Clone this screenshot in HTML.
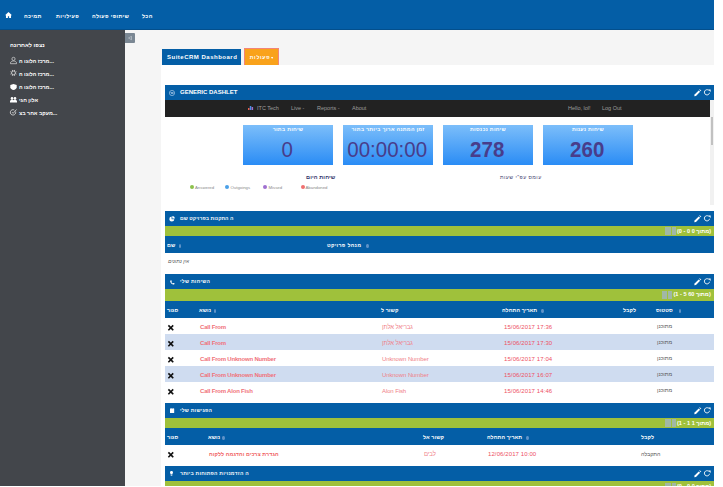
<!DOCTYPE html>
<html><head><meta charset="utf-8">
<style>
*{margin:0;padding:0;box-sizing:border-box}
html,body{width:723px;height:487px;overflow:hidden;background:#fff;font-family:"Liberation Sans",sans-serif}
.a{position:absolute}
.t{position:absolute;white-space:nowrap;line-height:1}
svg{position:absolute;overflow:visible}
#page{position:absolute;left:0;top:0;width:714px;height:486px;background:#f5f5f5;overflow:hidden}
#nav{left:0;top:0;width:714px;height:30px;background:#045ea6}
.nv{color:#fff;font-size:5.4px;font-weight:bold;top:13.5px;letter-spacing:.35px}
#side{left:0;top:30px;width:125px;height:457px;background:#43464b}
.si{color:#fff;font-size:5.3px;font-weight:bold}
#panel{left:161px;top:65px;width:553px;height:422px;background:#fff}
.hd{position:absolute;left:165px;width:549px;height:15px;background:#045ea6}
.hdt{color:#fff;font-size:6px;font-weight:bold}
.hdh{color:#fff;font-size:5px;font-weight:bold;letter-spacing:.1px}
.gr{position:absolute;left:165px;width:549px;background:#9fc13b}
.th{position:absolute;left:165px;width:549px;height:17px;background:#045ea6}
.tht{color:#fff;font-size:5.3px;font-weight:bold;letter-spacing:.1px}
.alt{position:absolute;left:165px;width:549px;height:16px;background:#cfdcf0}
.red{color:#f0727a;font-size:6px;font-weight:bold;letter-spacing:-.2px}
.rel{color:#f08088;font-size:6px;letter-spacing:-.1px}
.dt{color:#ee5064;font-size:6px;letter-spacing:.1px}
.st{color:#555;font-size:5.4px}
.pg{color:#fff;font-size:5.6px;font-weight:bold}
.pb{position:absolute;background:#a3b3d3;opacity:.7}
.box{position:absolute;top:125px;width:90px;height:40px;background:linear-gradient(#7cbefa,#2a8cf5)}
.bt{position:absolute;left:0;width:90px;top:2px;text-align:center;color:#fff;font-size:5.2px;font-weight:bold;line-height:1;letter-spacing:.3px}
.bn{position:absolute;left:-.8px;width:90px;top:14.1px;transform:scaleY(1.07);transform-origin:0 0;text-align:center;color:#483d8b;font-size:20.5px;line-height:1}
.ifn{color:#9d9d9d;font-size:5.5px}
.lg{color:#8a8a8a;font-size:4.3px}
.dot{position:absolute;width:4px;height:4px;border-radius:50%}
.srt{position:absolute;width:2.6px;height:4px;background:#5f93c8;border-radius:50%}
</style></head><body>
<div id="page">
  <!-- NAV -->
  <div id="nav" class="a">
    <svg style="left:5.4px;top:11.8px" width="7" height="6.1" viewBox="0 0 8 7"><path d="M4 0L0 3.6h1.1V7h2.2V4.8h1.4V7h2.2V3.6H8z" fill="#fff"/></svg>
    <span class="t nv" style="left:24px">תמיכה</span>
    <span class="t nv" style="left:56px">פעילויות</span>
    <span class="t nv" style="left:92px">שיתופי פעולה</span>
    <span class="t nv" style="left:142px">הכל</span>
  </div>
  <div class="a" style="left:0;top:29px;width:714px;height:1px;background:#034f8c"></div>

  <!-- SIDEBAR -->
  <div id="side" class="a">
    <span class="t si" style="left:10px;top:13px;font-size:5.6px;font-weight:bold">נצפו לאחרונה</span>
    <svg style="left:10px;top:27px" width="7" height="7" viewBox="0 0 7 7" fill="none" stroke="#ddd" stroke-width=".7"><circle cx="3.5" cy="1.9" r="1.6"/><path d="M.5 6.7V6c0-1.2 1.3-2 3-2s3 .8 3 2v.7z"/></svg>
    <span class="t si" style="left:19px;top:29px">מרכז הלוגו ה...</span>
    <svg style="left:10px;top:40.3px" width="7" height="6" viewBox="0 0 7 6" fill="none" stroke="#e0e0e0" stroke-width=".8"><circle cx="3.5" cy="2.9" r="1.9"/><path d="M5.44 3.70L6.46 4.12M4.30 4.84L4.72 5.86M2.70 4.84L2.28 5.86M1.56 3.70L0.54 4.12M1.56 2.10L0.54 1.68M2.70 0.96L2.28 -0.06M4.30 0.96L4.72 -0.06M5.44 2.10L6.46 1.68"/></svg>
    <span class="t si" style="left:19px;top:42px">מרכז הלוגו ה...</span>
    <svg style="left:10px;top:54px" width="7" height="6" viewBox="0 0 7 6"><path d="M3.5 0L.3 1v2.2C.3 4.6 2 5.6 3.5 6 5 5.6 6.7 4.6 6.7 3.2V1z" fill="#fff"/></svg>
    <span class="t si" style="left:19px;top:55px">מרכז הלוגו ה...</span>
    <svg style="left:10px;top:67px" width="7" height="6" viewBox="0 0 7 6" fill="#fff"><circle cx="2" cy="1.4" r="1.3"/><circle cx="5" cy="1.4" r="1.3"/><path d="M0 5.6V4.4c0-.9.9-1.6 2-1.6s2 .7 2 1.6v1.2zM3.2 5.6V4.4c0-.9.7-1.6 1.8-1.6S7 3.5 7 4.4v1.2z"/></svg>
    <span class="t si" style="left:19px;top:68px">אלון חגי</span>
    <svg style="left:10px;top:79.4px" width="6.7" height="6.3" viewBox="0 0 6.7 6.3" fill="none" stroke="#e0e0e0" stroke-width=".8"><path d="M5.6 2.6A2.7 2.7 0 1 1 4.3 1"/><path d="M2.1 3.2l1.1 1.1L6.5 .5"/></svg>
    <span class="t si" style="left:19px;top:81px">מעקב אחר בצ...</span>
  </div>
  <div class="a" style="left:125px;top:33px;width:10px;height:10px;background:#7a8793;border-radius:0 1px 1px 0"></div>
  <svg style="left:128px;top:36px" width="4" height="4" viewBox="0 0 4 4"><path d="M3.5 .3v3.4L.5 2z" fill="none" stroke="#c9d0d6" stroke-width=".6"/></svg>

  <!-- TABS -->
  <div class="a" style="left:162px;top:49px;width:79px;height:16px;background:#045ea6"></div>
  <span class="t" style="left:167px;top:53.5px;color:#fff;font-size:6px;font-weight:bold;letter-spacing:.5px">SuiteCRM Dashboard</span>
  <div class="a" style="left:244px;top:48px;width:35px;height:17px;background:#f9a21b;border:1px solid #f28478;border-bottom:none"></div>
  <span class="t" style="left:249.7px;top:55.3px;color:#fff;font-size:5.2px;font-weight:bold;letter-spacing:.7px">פעולות</span><svg style="left:271px;top:56.8px" width="2.2" height="2" viewBox="0 0 3 2.5"><path d="M0 0h3L1.5 2.5z" fill="#fff"/></svg>
  <div id="panel" class="a"></div>

  <!-- DASHLET 1 : generic -->
  <div class="hd" style="top:85px"></div>
  <svg style="left:169px;top:89.5px" width="6" height="6" viewBox="0 0 6 6" fill="none" stroke="#a9c8e8" stroke-width=".7"><circle cx="3" cy="3" r="2.6"/><path d="M1.5 2.5h3M2 3.5h2.5"/></svg>
  <span class="t hdt" style="left:180px;top:89.3px">GENERIC DASHLET</span>
  <div class="a" style="left:165px;top:100px;width:545px;height:17px;background:#222"></div>
  <div class="a" style="left:710px;top:100px;width:4px;height:105px;background:#f1f1f1"></div>
  <div class="a" style="left:711px;top:117px;width:2px;height:28px;background:#c1c1c1"></div>
  <svg style="left:248px;top:106px" width="6" height="4" viewBox="0 0 6 4"><rect x="0" y="2" width="1.5" height="2" fill="#e8604a"/><rect x="1.8" y="0" width="1.5" height="4" fill="#4a8ee8"/><rect x="3.6" y="1" width="1.5" height="3" fill="#a070d0"/></svg>
  <span class="t ifn" style="left:257px;top:106px">ITC Tech</span>
  <span class="t ifn" style="left:291px;top:106px">Live -</span>
  <span class="t ifn" style="left:317px;top:106px">Reports -</span>
  <span class="t ifn" style="left:352px;top:106px">About</span>
  <span class="t ifn" style="left:568px;top:106px">Hello, lol!</span>
  <span class="t ifn" style="left:602px;top:106px">Log Out</span>
  <div class="box" style="left:243px"><span class="bt">שיחות בתור</span><span class="bn">0</span></div>
  <div class="box" style="left:343px"><span class="bt">זמן המתנה ארוך ביותר בתור</span><span class="bn">00:00:00</span></div>
  <div class="box" style="left:443px"><span class="bt">שיחות נכנסות</span><span class="bn" style="font-weight:bold">278</span></div>
  <div class="box" style="left:543px"><span class="bt">שיחות נענות</span><span class="bn" style="font-weight:bold">260</span></div>
  <span class="t" style="left:306px;top:175px;color:#36366a;font-size:5.6px;font-weight:bold;letter-spacing:.1px">שיחות היום</span>
  <span class="t" style="left:500px;top:175px;color:#45456f;font-size:5.2px;letter-spacing:.45px">עומס עפ"י שעות</span>
  <div class="dot" style="left:190px;top:184.5px;background:#8cc14c"></div><span class="t lg" style="left:195px;top:186px">Answered</span>
  <div class="dot" style="left:225px;top:184.5px;background:#4aa0e8"></div><span class="t lg" style="left:230.5px;top:186px">Outgoings</span>
  <div class="dot" style="left:263px;top:184.5px;background:#a070d0"></div><span class="t lg" style="left:268.5px;top:186px">Missed</span>
  <div class="dot" style="left:300.5px;top:184.5px;background:#f07070"></div><span class="t lg" style="left:305.5px;top:186px">Abandoned</span>

  <!-- DASHLET 2 -->
  <div class="hd" style="top:211px"></div>
  <svg style="left:169px;top:215.8px" width="6" height="5.5" viewBox="0 0 6 5.5" fill="#fff"><path d="M2.6 .6A2.5 2.5 0 1 0 5.3 3.2H2.6z"/><path d="M3.3 0v2.5H5.8A2.5 2.5 0 0 0 3.3 0z"/></svg>
  <span class="t hdh" style="left:180px;top:216px">ה התקנות בפרויקט שם</span>
  <div class="gr" style="top:226px;height:10px"></div>
  <div class="pb" style="left:665px;top:227px;width:5.5px;height:8px"></div>
  <div class="pb" style="left:672px;top:227px;width:3.5px;height:8px"></div>
  <span class="t pg" style="left:677px;top:228.5px">(0 - 0 מתוך 0)</span>
  <div class="th" style="top:236px"></div>
  <span class="t tht" style="left:167px;top:243px">שם</span><div class="srt" style="left:178.5px;top:244px"></div>
  <span class="t tht" style="left:327px;top:243px;letter-spacing:.3px">מנהל פרויקט</span><div class="srt" style="left:366px;top:244px"></div>
  <span class="t" style="left:168px;top:259px;color:#555;font-size:5.2px;font-style:italic">אין נתונים</span>

  <!-- DASHLET 3 -->
  <div class="hd" style="top:274px"></div>
  <svg style="left:169.8px;top:279.5px" width="4.5" height="4.5" viewBox="0 0 4.5 4.5" fill="#fff"><path d="M.2 .9C.4 .3 .8 0 1.2 .2l.6.9c.1.3-.1.6-.4.8.3.7.8 1.2 1.5 1.5.2-.3.5-.5.8-.4l.9.6c.2.4-.1.8-.7 1C2.2 4.600 -.1 2.400 .2 .9z"/></svg>
  <span class="t hdh" style="left:180px;top:279px;letter-spacing:.3px">השיחות שלי</span>
  <div class="gr" style="top:289px;height:12px"></div>
  <div class="pb" style="left:662px;top:291px;width:4.5px;height:7.5px"></div>
  <div class="pb" style="left:668px;top:291px;width:3.7px;height:7.5px"></div>
  <span class="t pg" style="left:673.5px;top:291.5px">(1 - 5 מתוך 60)</span>
  <div class="th" style="top:301px"></div>
  <span class="t tht" style="left:167px;top:308px">סגור</span>
  <span class="t tht" style="left:199px;top:308px">נושא</span><div class="srt" style="left:213.5px;top:309px"></div>
  <span class="t tht" style="left:381px;top:308px">קשור ל</span>
  <span class="t tht" style="left:502px;top:308px">תאריך התחלה</span><div class="srt" style="left:541px;top:309px"></div>
  <span class="t tht" style="left:623px;top:308px">לקבל</span>
  <span class="t tht" style="left:656px;top:308px">סטטוס</span><div class="srt" style="left:678.5px;top:309px"></div>
  <div class="alt" style="top:334px"></div>
  <div class="alt" style="top:366px"></div>
  <svg style="left:168.2px;top:325px" width="5.6" height="5.6" viewBox="0 0 6 6"><path d="M1 1L5 5M5 1L1 5" stroke="#111" stroke-width="1.7" stroke-linecap="square"/></svg>
  <span class="t red" style="left:200px;top:324px">Call From</span>
  <span class="t rel" style="left:382px;top:324px">גבריאל אלתן</span>
  <span class="t dt" style="left:504px;top:324px">15/06/2017 17:36</span>
  <span class="t st" style="left:657px;top:324px">מתוכנן</span>
  <svg style="left:168.2px;top:341px" width="5.6" height="5.6" viewBox="0 0 6 6"><path d="M1 1L5 5M5 1L1 5" stroke="#111" stroke-width="1.7" stroke-linecap="square"/></svg>
  <span class="t red" style="left:200px;top:340px">Call From</span>
  <span class="t rel" style="left:382px;top:340px">גבריאל אלתן</span>
  <span class="t dt" style="left:504px;top:340px">15/06/2017 17:30</span>
  <span class="t st" style="left:657px;top:340px">מתוכנן</span>
  <svg style="left:168.2px;top:357px" width="5.6" height="5.6" viewBox="0 0 6 6"><path d="M1 1L5 5M5 1L1 5" stroke="#111" stroke-width="1.7" stroke-linecap="square"/></svg>
  <span class="t red" style="left:200px;top:356px">Call From Unknown Number</span>
  <span class="t rel" style="left:382px;top:356px">Unknown Number</span>
  <span class="t dt" style="left:504px;top:356px">15/06/2017 17:04</span>
  <span class="t st" style="left:657px;top:356px">מתוכנן</span>
  <svg style="left:168.2px;top:373px" width="5.6" height="5.6" viewBox="0 0 6 6"><path d="M1 1L5 5M5 1L1 5" stroke="#111" stroke-width="1.7" stroke-linecap="square"/></svg>
  <span class="t red" style="left:200px;top:372px">Call From Unknown Number</span>
  <span class="t rel" style="left:382px;top:372px">Unknown Number</span>
  <span class="t dt" style="left:504px;top:372px">15/06/2017 16:07</span>
  <span class="t st" style="left:657px;top:372px">מתוכנן</span>
  <svg style="left:168.2px;top:389px" width="5.6" height="5.6" viewBox="0 0 6 6"><path d="M1 1L5 5M5 1L1 5" stroke="#111" stroke-width="1.7" stroke-linecap="square"/></svg>
  <span class="t red" style="left:200px;top:388px">Call From Alon Fish</span>
  <span class="t rel" style="left:382px;top:388px">Alon Fish</span>
  <span class="t dt" style="left:504px;top:388px">15/06/2017 14:46</span>
  <span class="t st" style="left:657px;top:388px">מתוכנן</span>


  <!-- DASHLET 4 -->
  <div class="hd" style="top:403px"></div>
  <svg style="left:170px;top:408px" width="4.2" height="5" viewBox="0 0 4.2 5" fill="#fff"><rect x="0" y=".6" width="4.2" height="4.4"/><rect x=".8" y="0" width=".6" height="1" /><rect x="2.8" y="0" width=".6" height="1"/></svg>
  <span class="t hdh" style="left:180px;top:408px;letter-spacing:.25px">הפגישות שלי</span>
  <div class="gr" style="top:418px;height:10px"></div>
  <div class="pb" style="left:665px;top:419px;width:5.5px;height:8px"></div>
  <div class="pb" style="left:672px;top:419px;width:3.5px;height:8px"></div>
  <span class="t pg" style="left:677px;top:420.5px">(1 - 1 מתוך 1)</span>
  <div class="th" style="top:428px"></div>
  <span class="t tht" style="left:167px;top:435px">סגור</span>
  <span class="t tht" style="left:208px;top:435px">נושא</span><div class="srt" style="left:222px;top:436px"></div>
  <span class="t tht" style="left:423px;top:435px">קשור אל</span>
  <span class="t tht" style="left:487px;top:435px">תאריך התחלה</span><div class="srt" style="left:526px;top:436px"></div>
  <span class="t tht" style="left:641px;top:435px">לקבל</span>
  <svg style="left:168.2px;top:452.2px" width="5.6" height="5.6" viewBox="0 0 6 6"><path d="M1 1L5 5M5 1L1 5" stroke="#111" stroke-width="1.7" stroke-linecap="square"/></svg>
  <span class="t red" style="left:209px;top:451.7px;font-size:5.3px;letter-spacing:.1px;color:#f06060">הגדרת צרכים והדגמה ללקוח</span>
  <span class="t rel" style="left:424px;top:451px">לבים</span>
  <span class="t dt" style="left:488px;top:451px">12/06/2017 10:00</span>
  <span class="t st" style="left:641px;top:451.6px">התקבלה</span>


  <!-- DASHLET 5 -->
  <div class="hd" style="top:466px"></div>
  <svg style="left:170.4px;top:471px" width="3" height="5" viewBox="0 0 3 5" fill="#fff"><path d="M1.5 0C.6 0 0 .6 0 1.4c0 .6.4 1 .6 1.5V3.5h1.8V2.9C2.6 2.400 3 2 3 1.4 3 .6 2.400 0 1.5 0z"/><rect x=".7" y="3.9" width="1.6" height="1" opacity=".7"/></svg>
  <span class="t hdh" style="left:180px;top:471px;letter-spacing:.25px">ה הזדמנויות הפתוחות ביותר</span>
  <div class="gr" style="top:481px;height:12px"></div>
  <div class="pb" style="left:665px;top:483px;width:5.5px;height:8px"></div>
  <div class="pb" style="left:672px;top:483px;width:3.5px;height:8px"></div>
  <span class="t pg" style="left:677px;top:484px">(0 - 0 מתוך 0)</span>
  <svg style="left:693.6px;top:88.9px" width="7.5" height="7.5" viewBox="0 0 7.5 7.5" fill="#fff"><path d="M.3 7.2L.6 5.5 4.7 1.4 6.1 2.8 2 6.9z"/><path d="M5.2 .8 5.8 .2 7.3 1.7 6.7 2.3z"/></svg>
  <svg style="left:703.8px;top:89.4px" width="7" height="7" viewBox="0 0 7 7"><path d="M4.67 1.31A2.6 2.6 0 1 0 5.56 3.75" fill="none" stroke="#fff" stroke-width=".9"/><path d="M4.1 .4h2.5v2.5z" fill="#fff"/></svg>
  <svg style="left:693.6px;top:214.9px" width="7.5" height="7.5" viewBox="0 0 7.5 7.5" fill="#fff"><path d="M.3 7.2L.6 5.5 4.7 1.4 6.1 2.8 2 6.9z"/><path d="M5.2 .8 5.8 .2 7.3 1.7 6.7 2.3z"/></svg>
  <svg style="left:703.8px;top:215.4px" width="7" height="7" viewBox="0 0 7 7"><path d="M4.67 1.31A2.6 2.6 0 1 0 5.56 3.75" fill="none" stroke="#fff" stroke-width=".9"/><path d="M4.1 .4h2.5v2.5z" fill="#fff"/></svg>
  <svg style="left:693.6px;top:277.9px" width="7.5" height="7.5" viewBox="0 0 7.5 7.5" fill="#fff"><path d="M.3 7.2L.6 5.5 4.7 1.4 6.1 2.8 2 6.9z"/><path d="M5.2 .8 5.8 .2 7.3 1.7 6.7 2.3z"/></svg>
  <svg style="left:703.8px;top:278.4px" width="7" height="7" viewBox="0 0 7 7"><path d="M4.67 1.31A2.6 2.6 0 1 0 5.56 3.75" fill="none" stroke="#fff" stroke-width=".9"/><path d="M4.1 .4h2.5v2.5z" fill="#fff"/></svg>
  <svg style="left:693.6px;top:406.9px" width="7.5" height="7.5" viewBox="0 0 7.5 7.5" fill="#fff"><path d="M.3 7.2L.6 5.5 4.7 1.4 6.1 2.8 2 6.9z"/><path d="M5.2 .8 5.8 .2 7.3 1.7 6.7 2.3z"/></svg>
  <svg style="left:703.8px;top:407.4px" width="7" height="7" viewBox="0 0 7 7"><path d="M4.67 1.31A2.6 2.6 0 1 0 5.56 3.75" fill="none" stroke="#fff" stroke-width=".9"/><path d="M4.1 .4h2.5v2.5z" fill="#fff"/></svg>
  <svg style="left:693.6px;top:469.9px" width="7.5" height="7.5" viewBox="0 0 7.5 7.5" fill="#fff"><path d="M.3 7.2L.6 5.5 4.7 1.4 6.1 2.8 2 6.9z"/><path d="M5.2 .8 5.8 .2 7.3 1.7 6.7 2.3z"/></svg>
  <svg style="left:703.8px;top:470.4px" width="7" height="7" viewBox="0 0 7 7"><path d="M4.67 1.31A2.6 2.6 0 1 0 5.56 3.75" fill="none" stroke="#fff" stroke-width=".9"/><path d="M4.1 .4h2.5v2.5z" fill="#fff"/></svg>

</div>
</body></html>
